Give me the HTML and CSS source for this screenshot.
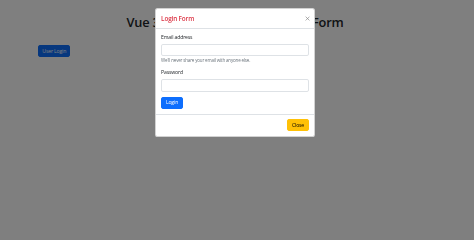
FILE: index.html
```html
<!DOCTYPE html>
<html lang="en">
<head>
<meta charset="utf-8">
<title>Vue 3 Bootstrap 5 Modal Login Form</title>
<link rel="stylesheet" href="styles.css">
</head>
<body>
<div class="page">
  <h1 class="title">Vue 3 Bootstrap 5 Modal Login Form</h1>
  <button class="btn btn-primary open-btn" type="button">User Login</button>
</div>
<div class="backdrop"></div>
<div class="modal">
  <div class="modal-content">
    <div class="modal-header">
      <h5 class="modal-title">Login Form</h5>
      <button class="btn-close" type="button" aria-label="Close">
        <svg viewBox="0 0 16 16" width="100%" height="100%"><path d="M2 2L14 14M14 2L2 14" stroke="#000" stroke-width="2" fill="none"/></svg>
      </button>
    </div>
    <div class="modal-body">
      <div class="field">
        <label class="form-label">Email address</label>
        <input class="form-control" type="email">
        <div class="form-text">We'll never share your email with anyone else.</div>
      </div>
      <div class="field">
        <label class="form-label">Password</label>
        <input class="form-control" type="password">
      </div>
      <button class="btn btn-primary" type="button">Login</button>
    </div>
    <div class="modal-footer">
      <button class="btn btn-warning" type="button">Close</button>
    </div>
  </div>
</div>
</body>
</html>
```

FILE: styles.css
```css
html {
  font-size: 5.12px;
}
body {
  margin: 0;
  font-family: "Open Sans", "Noto Sans", sans-serif;
  font-size: 1rem;
  line-height: 1.5rem;
  letter-spacing: -0.03em;
  color: #212529;
  background: #fff;
  height: 228px;
  overflow: hidden;
}
.page {
  display: flex;
  flex-direction: column;
  align-items: flex-start;
  padding: 15px 0 0 38px;
}
.title {
  align-self: stretch;
  margin: 0 42px 15px 0;
  text-align: center;
  font-size: 2.5rem;
  font-weight: 600;
  line-height: 3rem;
  letter-spacing: -0.015em;
}
.btn {
  display: inline-flex;
  align-items: center;
  justify-content: center;
  box-sizing: border-box;
  height: 12px;
  font-family: inherit;
  font-size: 1rem;
  line-height: 1.5rem;
  letter-spacing: -0.03em;
  font-weight: 400;
  padding: 0 0.75rem;
  border: 1px solid transparent;
  border-radius: 0.375rem;
  cursor: pointer;
}
.btn-primary {
  color: #fff;
  background: #0d6efd;
  border-color: #0d6efd;
}
.open-btn {
  padding: 0 0.65rem;
}
.btn-warning {
  color: #000;
  background: #ffc107;
  border-color: #ffc107;
}
.backdrop {
  position: fixed;
  inset: 0;
  background: rgba(0, 0, 0, 0.5);
}
.modal {
  position: fixed;
  top: 0;
  left: 155px;
  width: 160px;
  margin-top: 8.3px;
}
.modal-content {
  display: flex;
  flex-direction: column;
  background: #fff;
  border: 1px solid rgba(0, 0, 0, 0.175);
  border-radius: 0.5rem;
}
.modal-header {
  display: flex;
  align-items: center;
  justify-content: space-between;
  padding: 4.7px 1rem;
  border-bottom: 1px solid #dee2e6;
}
.modal-title {
  margin: 0;
  font-size: 1.25rem;
  font-weight: 600;
  line-height: 1.875rem;
  color: #dc3545;
}
.btn-close {
  width: 1rem;
  height: 1rem;
  padding: 0.25rem;
  margin: -0.5rem -0.5rem -0.5rem auto;
  border: 0;
  background: transparent;
  opacity: 0.5;
  box-sizing: content-box;
}
.btn-close svg {
  display: block;
}
.modal-body {
  display: flex;
  flex-direction: column;
  align-items: flex-start;
  padding: 4.5px 1rem 1rem;
}
.field {
  align-self: stretch;
  display: flex;
  flex-direction: column;
  margin-bottom: 1rem;
}
.form-label {
  margin-bottom: 0.5rem;
}
.form-control {
  box-sizing: border-box;
  width: 100%;
  height: 2.375rem;
  margin: 0;
  padding: 0.375rem 0.75rem;
  font-family: inherit;
  font-size: 1rem;
  border: 1px solid #dee2e6;
  border-radius: 0.375rem;
  background: #fff;
}
.form-text {
  margin-top: 0.25rem;
  font-size: 0.875rem;
  line-height: 1.3125rem;
  color: #6c757d;
}
.modal-footer {
  display: flex;
  justify-content: flex-end;
  padding: 3.3px 0.75rem;
  border-top: 1px solid #dee2e6;
}
.modal-footer .btn {
  margin: 0.25rem;
}
```
